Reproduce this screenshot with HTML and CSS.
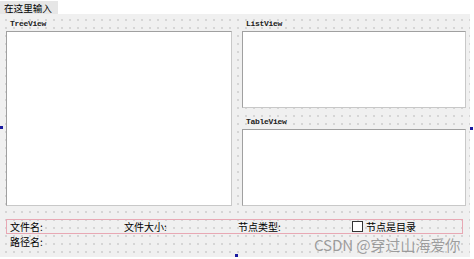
FILE: index.html
```html
<!DOCTYPE html>
<html>
	<head>
		<title>Form</title>
		<meta charset="utf-8">
		<link rel="stylesheet" href="styles.css">
	</head>
	<body>
		<div class="toolbar">
			<span class="input-tip">在这里输入</span>
		</div>
		<div class="form">
			<div class="views">
				<div class="group group-tree">
					<div class="group-title">TreeView</div>
					<div class="frame"></div>
				</div>
				<div class="right-col">
					<div class="group">
						<div class="group-title">ListView</div>
						<div class="frame"></div>
					</div>
					<div class="group">
						<div class="group-title">TableView</div>
						<div class="frame"></div>
					</div>
				</div>
			</div>
			<div class="info-row">
				<span>文件名:</span>
				<span>文件大小:</span>
				<span>节点类型:</span>
				<span class="check"><i class="box"></i>节点是目录</span>
			</div>
			<div class="path-row">路径名:</div>

			<i class="handle handle-left"></i>
			<i class="handle handle-right"></i>
			<i class="handle handle-bottom"></i>
			<div class="watermark">CSDN @穿过山海爱你</div>
		</div>
	</body>
</html>
```

FILE: styles.css
```css
*{ margin:0; padding:0; }
body{
	width:474px;
	height:259px;
	background:#fff;
	overflow:hidden;
	font-family:"Noto Sans CJK SC", "Liberation Sans", sans-serif;
	font-size:10px;
	color:#000;
}
.toolbar{
	height:14px;
}
.input-tip{
	display:inline-block;
	height:14px;
	line-height:14px;
	padding:0 6px 0 4px;
	background:#e6e6e6;
	font-size:9.6px;
}
.form{
	position:relative;
	width:470px;
	height:243px;
	padding:3px 4px 0 6px;
	box-sizing:border-box;
	background-color:#f0f0f0;
	background-image:radial-gradient(circle, #c6c6c6 0.6px, transparent 0.9px);
	background-size:8px 8px;
	background-position:2px 2px;
}
.views{
	display:grid;
	grid-template-columns:226px 224px;
	column-gap:10px;
	height:189px;
}
.right-col{
	display:flex;
	flex-direction:column;
	gap:7px;
}
.group{
	display:flex;
	flex-direction:column;
}
.group-title{
	height:14px;
	padding:1px 0 0 4px;
	box-sizing:border-box;
	font-family:"Liberation Mono", monospace;
	font-size:8px;
	font-weight:bold;
	line-height:12px;
	letter-spacing:-0.3px;
	color:#222;
}
.frame{
	height:77px;
	background:#fff;
	border:1px solid #a0a0a0;
	border-right-color:#c8c8c8;
	border-bottom-color:#c8c8c8;
	box-sizing:border-box;
}
.group-tree .frame{
	height:175px;
}
.info-row{
	display:grid;
	grid-template-columns:repeat(4, 114px);
	width:457px;
	height:15px;
	margin-top:13px;
	padding-left:3px;
	box-sizing:border-box;
	border:1px solid #e8a8b4;
	line-height:13px;
}
.check{
	display:flex;
	align-items:center;
	gap:3px;
}
.box{
	width:9px;
	height:9px;
	border:1px solid #333;
	background:#fff;
}
.path-row{
	padding:1px 0 0 4px;
	line-height:13px;
}
.handle{
	position:absolute;
	width:3px;
	height:3px;
	background:#1a1aa0;
}
.handle-left{ left:0; top:112px; }
.handle-right{ right:-3px; top:113px; }
.handle-bottom{ left:235px; bottom:0; }
.watermark{
	position:absolute;
	left:314px;
	top:219px;
	font-size:15.2px;
	color:rgba(120,120,120,0.7);
	letter-spacing:-0.2px;
	white-space:nowrap;
}
```
